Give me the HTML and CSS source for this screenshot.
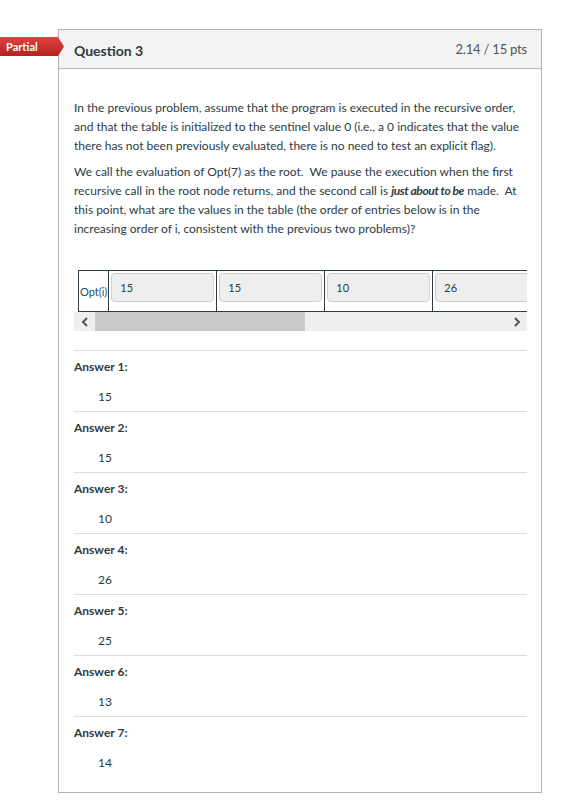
FILE: index.html
```html
<!DOCTYPE html>
<html lang="en">
    <head>
        <meta charset="UTF-8">
        <title>Question 3</title>
        <link rel="stylesheet" href="styles.css">
    </head>
    <body>
        <div class="badge">Partial</div>
        <div class="question">
            <div class="header">
                <span class="title">Question 3</span>
                <span class="points">2.14 / 15 pts</span>
            </div>
            <div class="body">
                <p>In the previous problem, assume that the program is executed in the recursive order, and that the table is initialized to the sentinel value 0 (i.e., a 0 indicates that the value there has not been previously evaluated, there is no need to test an explicit flag).</p>
                <p>We call the evaluation of Opt(7) as the root.&nbsp; We pause the execution when the first recursive call in the root node returns, and the second call is <b class="em">just about to be</b> made.&nbsp; At this point, what are the values in the table (the order of entries below is in the increasing order of i, consistent with the previous two problems)?</p>

                <div class="scroller">
                    <div class="viewport">
                        <table class="opt">
                            <tr>
                                <td class="head">Opt(i)</td>
                                <td><span class="box">15</span></td>
                                <td><span class="box">15</span></td>
                                <td><span class="box">10</span></td>
                                <td><span class="box">26</span></td>
                            </tr>
                        </table>
                    </div>
                    <div class="bar">
                        <span class="arrow">
                            <svg width="8" height="10" viewBox="0 0 8 10"><path d="M6 1 L2 5 L6 9" fill="none" stroke="#555" stroke-width="2"/></svg>
                        </span>
                        <span class="track"><span class="thumb"></span></span>
                        <span class="arrow">
                            <svg width="8" height="10" viewBox="0 0 8 10"><path d="M2 1 L6 5 L2 9" fill="none" stroke="#555" stroke-width="2"/></svg>
                        </span>
                    </div>
                </div>

                <div class="answer">
                    <div class="label">Answer 1:</div>
                    <div class="value">15</div>
                </div>
                <div class="answer">
                    <div class="label">Answer 2:</div>
                    <div class="value">15</div>
                </div>
                <div class="answer">
                    <div class="label">Answer 3:</div>
                    <div class="value">10</div>
                </div>
                <div class="answer">
                    <div class="label">Answer 4:</div>
                    <div class="value">26</div>
                </div>
                <div class="answer">
                    <div class="label">Answer 5:</div>
                    <div class="value">25</div>
                </div>
                <div class="answer">
                    <div class="label">Answer 6:</div>
                    <div class="value">13</div>
                </div>
                <div class="answer">
                    <div class="label">Answer 7:</div>
                    <div class="value">14</div>
                </div>
            </div>
        </div>
    </body>
</html>
```

FILE: styles.css
```css
body {
    margin: 0;
    padding: 29px 0 12px;
    background: #fff;
    color: #2d3b45;
    font-family: Lato, "Open Sans", sans-serif;
    font-size: 12px;
}

.badge {
    position: absolute;
    left: 0;
    top: 37px;
    width: 58px;
    height: 19px;
    padding-left: 6px;
    color: #fff;
    font-size: 11px;
    font-weight: bold;
    line-height: 19px;
    background: linear-gradient(#e2413f, #b3221f);
    clip-path: polygon(0 0, 58px 0, 64px 9.5px, 58px 19px, 0 19px);
}

.question {
    width: 482px;
    margin-left: 58px;
    border: 1px solid #b4b4b4;
}

.header {
    display: flex;
    justify-content: space-between;
    align-items: center;
    height: 38px;
    padding: 0 14px 0 15px;
    background: #f3f3f3;
    border-bottom: 1px solid #b4b4b4;
}

.title {
    font-size: 14px;
    font-weight: bold;
    padding-top: 3px;
}

.points {
    font-size: 13px;
    letter-spacing: -0.2px;
    color: #555;
}

.body {
    padding: 29px 14px 15px 15px;
}

.body p {
    margin: 0 0 7px;
    line-height: 19px;
}

.em {
    font-style: italic;
    letter-spacing: -0.4px;
}

.scroller {
    margin-top: 32px;
}

.viewport {
    overflow: hidden;
    padding-left: 4px;
}

.opt {
    border-collapse: collapse;
    border-top: 1px solid #2d3b45;
    border-bottom: 1px solid #2d3b45;
}

.opt td {
    height: 40px;
    padding: 0 2px;
    border-left: 1px solid #2d3b45;
    vertical-align: top;
}

.opt td.head {
    padding: 0 1px;
    vertical-align: middle;
    font-size: 11px;
    color: #1f4e79;
}

.box {
    display: block;
    box-sizing: border-box;
    width: 103px;
    height: 29px;
    margin-top: 2px;
    padding: 7px 0 0 8px;
    font-size: 11px;
    border: 1px solid #cfcfcf;
    border-radius: 4px;
    background: #eee;
}

.bar {
    display: flex;
    height: 19px;
    background: #efefef;
}

.arrow {
    display: flex;
    align-items: center;
    justify-content: center;
    width: 21px;
}

.track {
    flex: 1;
}

.thumb {
    display: block;
    width: 210px;
    height: 19px;
    background: #cacaca;
}

.answer {
    height: 60px;
    border-top: 1px solid #dcdcdc;
}

.scroller + .answer {
    margin-top: 19px;
}

.label {
    padding-top: 7px;
    font-weight: bold;
    line-height: 18px;
}

.value {
    margin-top: 12px;
    padding-left: 24px;
    line-height: 18px;
}
```
